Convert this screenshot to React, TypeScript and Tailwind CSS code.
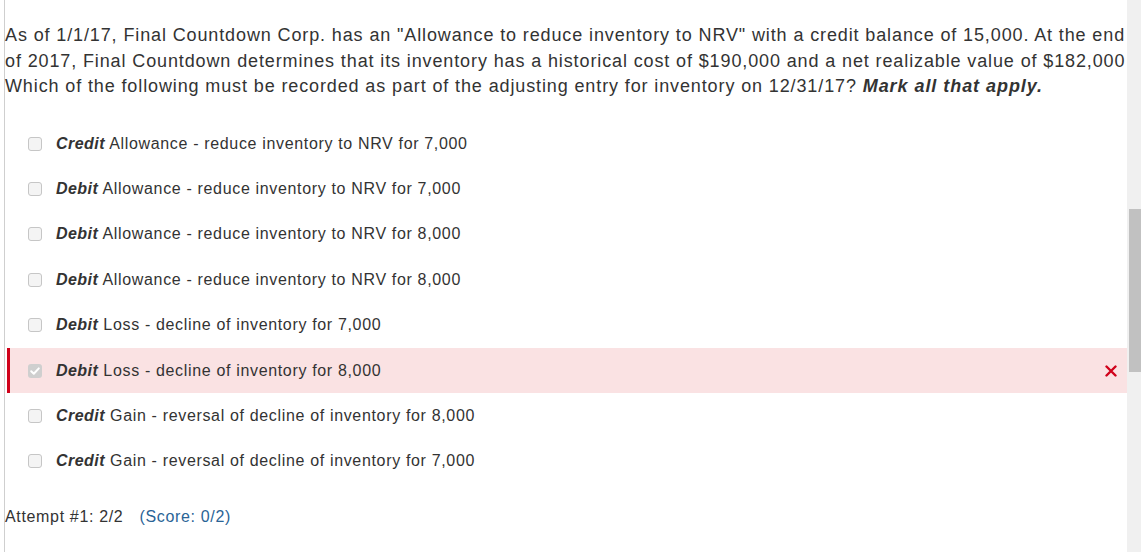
import React from 'react';

interface Choice {
  verb: string;
  rest: string;
  checked?: boolean;
  wrong?: boolean;
}

const choices: Choice[] = [
  { verb: 'Credit', rest: 'Allowance - reduce inventory to NRV for 7,000' },
  { verb: 'Debit', rest: 'Allowance - reduce inventory to NRV for 7,000' },
  { verb: 'Debit', rest: 'Allowance - reduce inventory to NRV for 8,000' },
  { verb: 'Debit', rest: 'Allowance - reduce inventory to NRV for 8,000' },
  { verb: 'Debit', rest: 'Loss - decline of inventory for 7,000' },
  { verb: 'Debit', rest: 'Loss - decline of inventory for 8,000', checked: true, wrong: true },
  { verb: 'Credit', rest: 'Gain - reversal of decline of inventory for 8,000' },
  { verb: 'Credit', rest: 'Gain - reversal of decline of inventory for 7,000' },
];

function Box({ checked }: { checked?: boolean }) {
  if (checked) {
    return (
      <span className="flex h-[14px] w-[14px] shrink-0 items-center justify-center rounded-[3px] bg-[#cfcfcf]">
        <svg viewBox="0 0 14 14" className="h-[14px] w-[14px]">
          <path d="M3.2 7.2 L5.8 9.8 L10.8 4.4" fill="none" stroke="#fff" strokeWidth="2" strokeLinecap="round" strokeLinejoin="round" />
        </svg>
      </span>
    );
  }
  return <span className="h-[14px] w-[14px] shrink-0 rounded-[3px] border border-[#c6c6c6] bg-[#f4f4f4]" />;
}

export default function App() {
  return (
    <div className="flex h-[552px] w-[1141px] overflow-hidden bg-white font-['Liberation_Sans',Arial,sans-serif] text-[#333]">
      <div className="ml-[4px] flex-1 border-l border-[#cfcfcf]">
        <p className="pt-[23px] text-[18px] leading-[25.5px] tracking-[0.88px]">
          As of 1/1/17, Final Countdown Corp. has an "Allowance to reduce inventory to NRV" with a credit balance of 15,000. At the end of 2017, Final Countdown determines that its inventory has a historical cost of $190,000 and a net realizable value of $182,000 Which of the following must be recorded as part of the adjusting entry for inventory on 12/31/17? <b className="italic tracking-[0.95px]">Mark all that apply.</b>
        </p>
        <ul className="mt-[21.5px] ml-[2px]">
          {choices.map((c, i) => (
            <li
              key={i}
              className={
                'flex h-[45.4px] items-center border-l-[3px] pl-[18px] pr-[10px] text-[16px] tracking-[0.66px] ' +
                (c.wrong ? 'border-[#d0021b] bg-[#fae2e3]' : 'border-transparent')
              }
            >
              <Box checked={c.checked} />
              <span className="ml-[14px] flex-1">
                <b className="italic tracking-[0.45px]">{c.verb}</b> {c.rest}
              </span>
              {c.wrong && (
                <svg viewBox="0 0 12 12" className="h-[12px] w-[12px]">
                  <path d="M1.5 1.5 L10.5 10.5 M10.5 1.5 L1.5 10.5" stroke="#d0021b" strokeWidth="2.4" strokeLinecap="round" />
                </svg>
              )}
            </li>
          ))}
        </ul>
        <div className="mt-[21.5px] flex text-[16px] leading-[22px] tracking-[0.66px]">
          <span>Attempt #1: 2/2</span>
          <span className="ml-[16px] text-[#2a6496]">(Score: 0/2)</span>
        </div>
      </div>
      <div className="w-[14px] shrink-0 bg-[#f0f0f0]">
        <div className="mt-[209px] ml-[2px] h-[163px] bg-[#c1c1c1]" />
      </div>
    </div>
  );
}
